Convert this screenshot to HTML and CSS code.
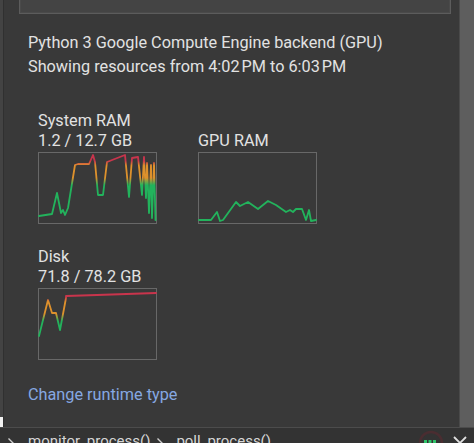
FILE: index.html
```html
<!DOCTYPE html>
<html>
<head>
<meta charset="utf-8">
<link rel="stylesheet" href="styles.css">
</head>
<body>
<div class="app">
  <div class="main">
    <div class="edge"><div class="edge-mark"></div></div>
    <div class="panel">
      <div class="topbox"></div>
      <div class="info">
        <div>Python 3 Google Compute Engine backend (GPU)</div>
        <div>Showing resources from 4:02&#8239;PM to 6:03&#8239;PM</div>
      </div>
      <div class="charts">
        <div class="chart-row">
          <div class="chart-item">
            <div class="label">System RAM</div>
            <div class="label">1.2 / 12.7 GB</div>
            <svg class="chart" width="119" height="72" viewBox="0 0 119 72">
              <defs>
                <linearGradient id="g1" gradientUnits="userSpaceOnUse" x1="0" y1="0" x2="0" y2="72">
                  <stop offset="0" stop-color="#c9344c"/>
                  <stop offset="0.12" stop-color="#c9344c"/>
                  <stop offset="0.19" stop-color="#de912c"/>
                  <stop offset="0.36" stop-color="#de912c"/>
                  <stop offset="0.46" stop-color="#22b35c"/>
                  <stop offset="1" stop-color="#22b35c"/>
                </linearGradient>
              </defs>
              <rect class="frame" x="0.5" y="0.5" width="118" height="71"/>
              <polyline class="line" stroke="url(#g1)" points="1,64 14,62 19,41 23,61 25,58 27,63 30,56 37,13 40,12 51,12 55,3 57,10 60,43 65,43 69,10 87,3 91,45 94,6 100,5 104,43 106,5 108,46 109,11 111,61 113,13 114,66 116,11 117.5,68"/>
            </svg>
          </div>
          <div class="chart-item">
            <div class="label">GPU RAM</div>
            <svg class="chart" width="119" height="72" viewBox="0 0 119 72">
              <rect class="frame" x="0.5" y="0.5" width="118" height="71"/>
              <polyline class="line" stroke="url(#g1)" points="1,68 13,68 19,60 22,69 25,68 38,50 42,54 50,50 60,57 70,49 78,53 88,60 92,58 95,60 98,57 104,57 108,68 111,58 113,69 118,68"/>
            </svg>
          </div>
        </div>
        <div class="chart-row disk-row">
          <div class="chart-item">
            <div class="label">Disk</div>
            <div class="label">71.8 / 78.2 GB</div>
            <svg class="chart" width="119" height="72" viewBox="0 0 119 72">
              <rect class="frame" x="0.5" y="0.5" width="118" height="71"/>
              <polyline class="line" stroke="url(#g1)" points="1,48 10,12 14,25 18,25 22,42 28,10 28,8 59,7 118,5"/>
            </svg>
          </div>
        </div>
      </div>
      <div class="link">Change runtime type</div>
    </div>
    <div class="scroll"></div>
  </div>
  <div class="statusbar">
    <span class="crumb first"><svg class="chev" width="8" height="12" viewBox="0 0 8 12"><path d="M1.5 1.5 L6 6 L1.5 10.5"/></svg></span>
    <span class="fn">monitor_process()</span>
    <span class="crumb second"><svg class="chev" width="8" height="12" viewBox="0 0 8 12"><path d="M1.5 1.5 L6 6 L1.5 10.5"/></svg></span>
    <span class="fn">poll_process()</span>
    <span class="spacer"></span>
    <svg class="res-icon" width="28" height="15" viewBox="0 0 28 15">
      <path class="arc" d="M3 15 A11 11 0 0 1 25 15"/>
      <rect class="bar" x="7" y="12" width="3" height="3"/>
      <rect class="bar" x="11.5" y="12" width="3" height="3"/>
      <rect class="bar" x="16" y="12" width="3" height="3"/>
    </svg>
    <svg class="close" width="16" height="15" viewBox="0 0 16 15"><path d="M2 9 L14 21 M14 9 L2 21"/></svg>
  </div>
</div>
</body>
</html>
```
FILE: styles.css
```css
html, body {
  margin: 0;
  padding: 0;
}
body {
  width: 474px;
  height: 443px;
  overflow: hidden;
  background: #393939;
  font-family: Roboto, "Liberation Sans", sans-serif;
  color: #e2e2e2;
}
.app {
  display: flex;
  flex-direction: column;
  height: 443px;
}
.main {
  display: flex;
  height: 428px;
  border-bottom: 1px solid #4c4c4c;
  box-sizing: border-box;
}
.edge {
  width: 3px;
  background: #434343;
  display: flex;
  flex-direction: column;
  justify-content: flex-end;
}
.edge-mark {
  height: 10px;
  background: #f2f2f2;
}
.panel {
  flex: 1;
  background: #393939;
  border-left: 1px solid #303030;
  display: flex;
  flex-direction: column;
}
.scroll {
  width: 14px;
  background: #5e5e5e;
  border-left: 1px solid #4a4a4a;
}
.topbox {
  height: 13px;
  margin-left: 15px;
  margin-right: 8px;
  background: #444444;
  border: 1px solid #5c5c5c;
  border-top: none;
  box-shadow: inset 0 -1px 0 #4a4a4a, inset 1px 0 0 #4a4a4a, inset -1px 0 0 #4a4a4a;
}
.info {
  margin-top: 17px;
  padding-left: 24px;
  font-size: 16.25px;
  line-height: 24px;
}
.charts {
  margin-top: 32px;
  padding-left: 34px;
}
.chart-row {
  display: flex;
  align-items: flex-end;
  gap: 41px;
}
.disk-row {
  margin-top: 23px;
}
.chart-item {
  display: flex;
  flex-direction: column;
}
.label {
  font-size: 16.25px;
  line-height: 20px;
  white-space: nowrap;
}
.chart {
  display: block;
  margin-top: 1px;
}
.frame {
  fill: none;
  stroke: #686868;
  stroke-width: 1;
}
.line {
  fill: none;
  stroke-width: 1.8;
  stroke-linejoin: round;
  stroke-linecap: round;
}
.link {
  margin-top: 25px;
  padding-left: 24px;
  font-size: 16.25px;
  line-height: 20px;
  color: #86a8e2;
}
.statusbar {
  height: 15px;
  background: #333333;
  display: flex;
  align-items: flex-start;
  overflow: hidden;
  font-size: 15px;
  line-height: 20px;
  color: #d6d6d6;
}
.crumb {
  display: flex;
  padding-top: 9px;
}
.chev {
  display: block;
  fill: none;
  stroke: #cfcfcf;
  stroke-width: 1.4;
}
.crumb.first {
  margin-left: 7px;
  margin-right: 13px;
}
.crumb.second {
  margin-left: 6px;
  margin-right: 12px;
}
.fn {
  padding-top: 3px;
  white-space: nowrap;
}
.spacer {
  flex: 1;
}
.res-icon {
  display: block;
  margin-right: 7px;
}
.arc {
  fill: none;
  stroke: #4a2d31;
  stroke-width: 2.5;
}
.bar {
  fill: #2fc36a;
}
.close {
  display: block;
  margin-right: 6px;
  fill: none;
  stroke: #e0e0e0;
  stroke-width: 1.8;
}
```
